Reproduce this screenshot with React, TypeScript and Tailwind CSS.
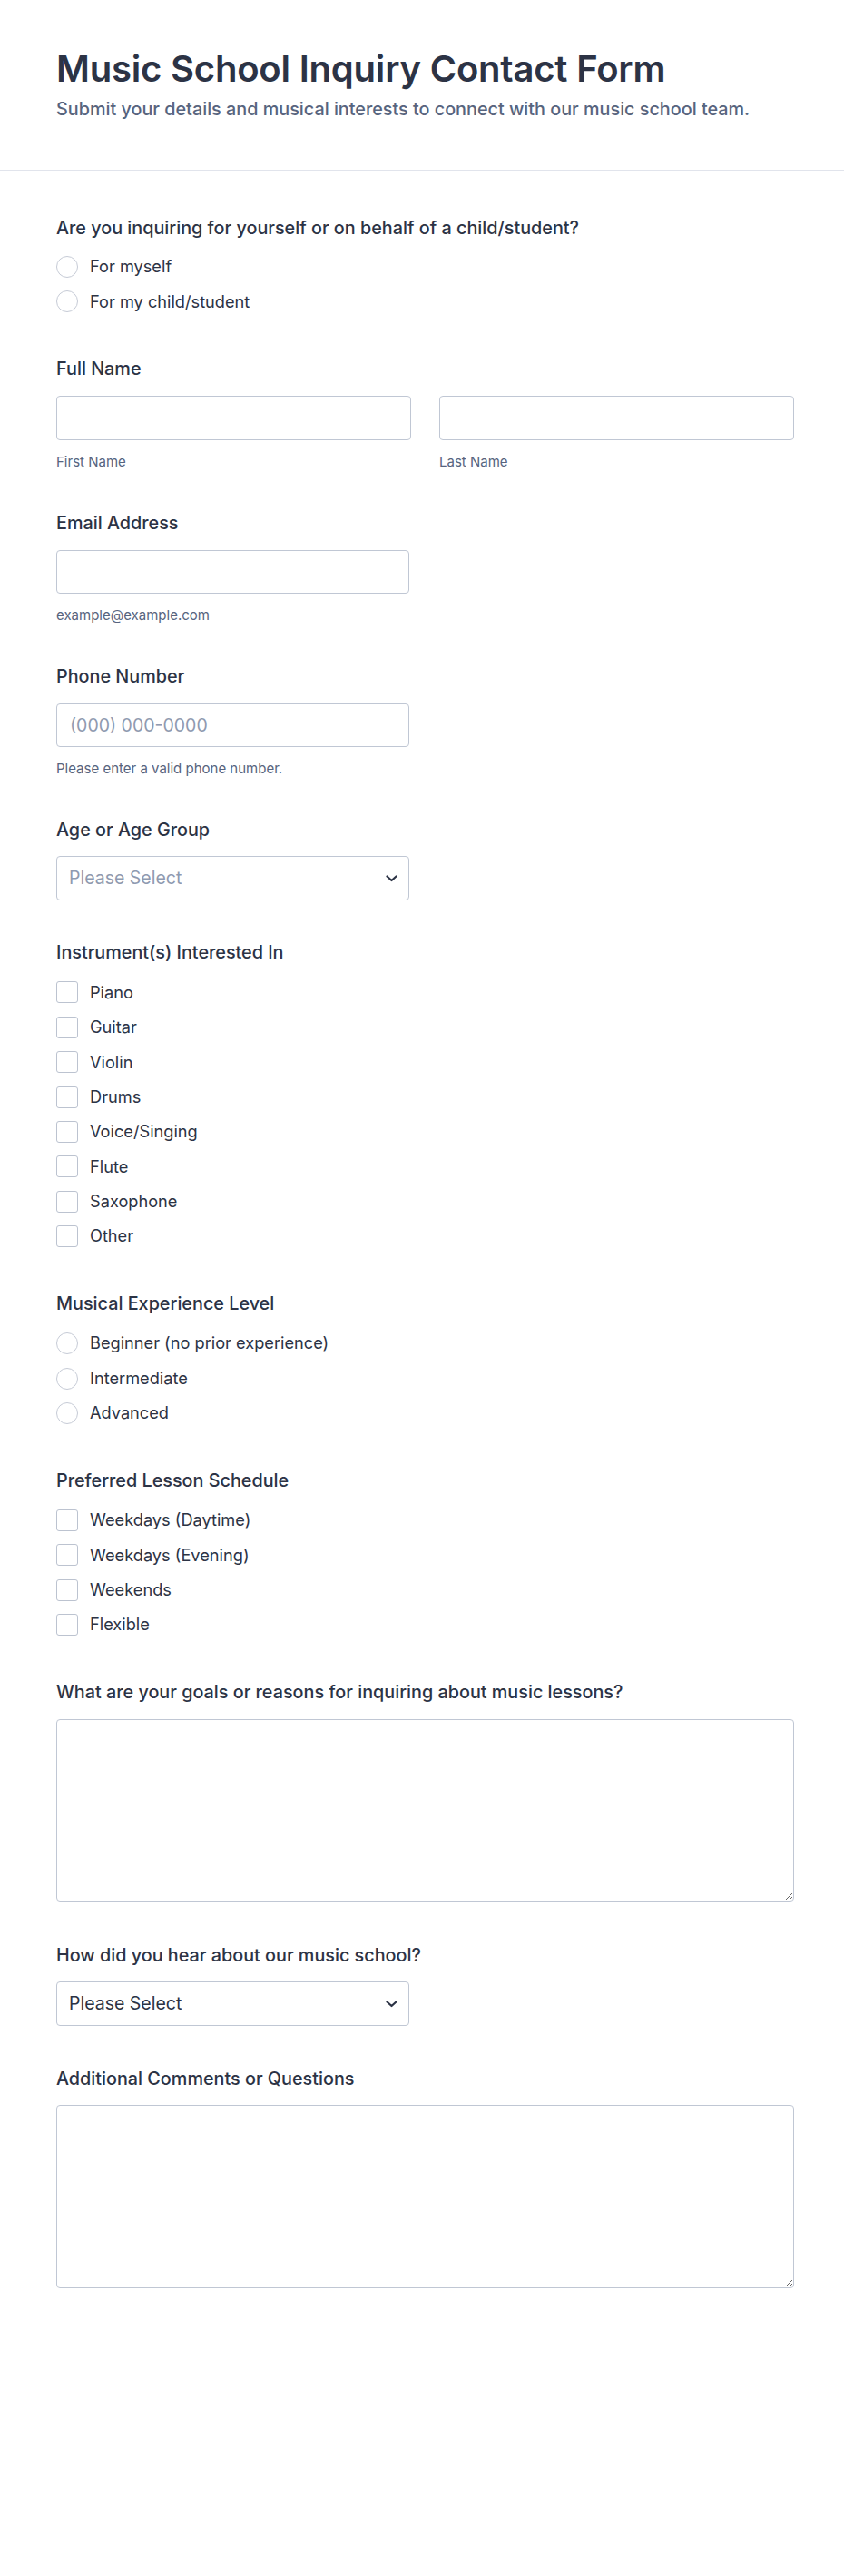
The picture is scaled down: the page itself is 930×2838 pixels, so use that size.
import React from 'react'

const labelCls = "block text-[19.8px] leading-[24px] font-medium text-[#2c3345]"
const inputCls = "block h-[48px] w-full rounded-[4px] border border-[#c0c7d4] bg-white px-[14px] text-[19.5px] text-[#2c3345] placeholder-[#8f9ab0] outline-none"
const subCls = "mt-[14px] text-[15px] leading-[20px] text-[#57647e]"

function Chevron() {
  return (
    <svg width="13" height="8" viewBox="0 0 13 8" fill="none" className="absolute right-[13px] top-1/2 -translate-y-1/2">
      <polyline points="1.5,1.5 6.5,6 11.5,1.5" stroke="#2c3345" strokeWidth="2.2" strokeLinecap="round" strokeLinejoin="round" />
    </svg>
  )
}

function SelectBox({ muted }: { muted?: boolean }) {
  return (
    <div className="relative w-[389px]">
      <div className={`flex h-[49px] items-center rounded-[4px] border border-[#c0c7d4] bg-white px-[13px] text-[19.5px] ${muted ? 'text-[#8f9ab0]' : 'text-[#2c3345]'}`}>
        Please Select
      </div>
      <Chevron />
    </div>
  )
}

function Options({ items, type }: { items: string[]; type: 'radio' | 'checkbox' }) {
  return (
    <div className="flex flex-col gap-[14.4px] pb-[5px]">
      {items.map(item => (
        <label key={item} className="flex h-[24px] items-center gap-[13px] text-[18.2px] text-[#2c3345]">
          <span
            className={`block h-[24px] w-[24px] shrink-0 border bg-white ${type === 'radio' ? 'rounded-full border-[#c6cbd6]' : 'rounded-[3px] border-[#bcc3d0]'}`}
          />
          <span>{item}</span>
        </label>
      ))}
    </div>
  )
}

export default function App() {
  return (
    <div className="min-h-[2838px] bg-white font-['Inter','Noto_Sans',sans-serif] text-[#2c3345]">
      {/* Header */}
      <div className="border-b border-[#e1e4ec] px-[62px] pt-[52px] pb-[53px]">
        <h1 className="text-[40px] leading-[48px] font-semibold tracking-[-0.2px] text-[#2c3345]">
          Music School Inquiry Contact Form
        </h1>
        <p className="mt-[6px] text-[19.8px] leading-[28px] font-medium text-[#57647e]">
          Submit your details and musical interests to connect with our music school team.
        </p>
      </div>

      {/* Form */}
      <div className="ml-[62px] flex w-[813px] flex-col gap-[45px] pt-[51px] pb-[120px]">
        <div>
          <div className={`${labelCls} mb-[19px]`}>Are you inquiring for yourself or on behalf of a child/student?</div>
          <Options type="radio" items={['For myself', 'For my child/student']} />
        </div>

        <div>
          <div className={`${labelCls} mb-[18px]`}>Full Name</div>
          <div className="grid grid-cols-2 gap-[31px]">
            <div>
              <input className={`${inputCls} h-[49px]`} />
              <div className={subCls}>First Name</div>
            </div>
            <div>
              <input className={`${inputCls} h-[49px]`} />
              <div className={subCls}>Last Name</div>
            </div>
          </div>
        </div>

        <div>
          <div className={`${labelCls} mb-[18px]`}>Email Address</div>
          <div className="w-[389px]">
            <input className={inputCls} />
            <div className={subCls}>example@example.com</div>
          </div>
        </div>

        <div>
          <div className={`${labelCls} mb-[18px]`}>Phone Number</div>
          <div className="w-[389px]">
            <input className={inputCls} placeholder="(000) 000-0000" />
            <div className={subCls}>Please enter a valid phone number.</div>
          </div>
        </div>

        <div>
          <div className={`${labelCls} mb-[17px]`}>Age or Age Group</div>
          <SelectBox muted />
        </div>

        <div>
          <div className={`${labelCls} mb-[20px]`}>Instrument(s) Interested In</div>
          <Options
            type="checkbox"
            items={['Piano', 'Guitar', 'Violin', 'Drums', 'Voice/Singing', 'Flute', 'Saxophone', 'Other']}
          />
        </div>

        <div>
          <div className={`${labelCls} mb-[20px]`}>Musical Experience Level</div>
          <Options type="radio" items={['Beginner (no prior experience)', 'Intermediate', 'Advanced']} />
        </div>

        <div>
          <div className={`${labelCls} mb-[20px]`}>Preferred Lesson Schedule</div>
          <Options
            type="checkbox"
            items={['Weekdays (Daytime)', 'Weekdays (Evening)', 'Weekends', 'Flexible']}
          />
        </div>

        <div className="pb-[2px]">
          <div className={`${labelCls} mb-[18px]`}>What are your goals or reasons for inquiring about music lessons?</div>
          <textarea className="block h-[201px] w-full rounded-[4px] border border-[#c0c7d4] bg-white outline-none" />
        </div>

        <div className="pb-[1px]">
          <div className={`${labelCls} mb-[17px]`}>How did you hear about our music school?</div>
          <SelectBox />
        </div>

        <div>
          <div className={`${labelCls} mb-[17px]`}>Additional Comments or Questions</div>
          <textarea className="block h-[202px] w-full rounded-[4px] border border-[#c0c7d4] bg-white outline-none" />
        </div>
      </div>
    </div>
  )
}
